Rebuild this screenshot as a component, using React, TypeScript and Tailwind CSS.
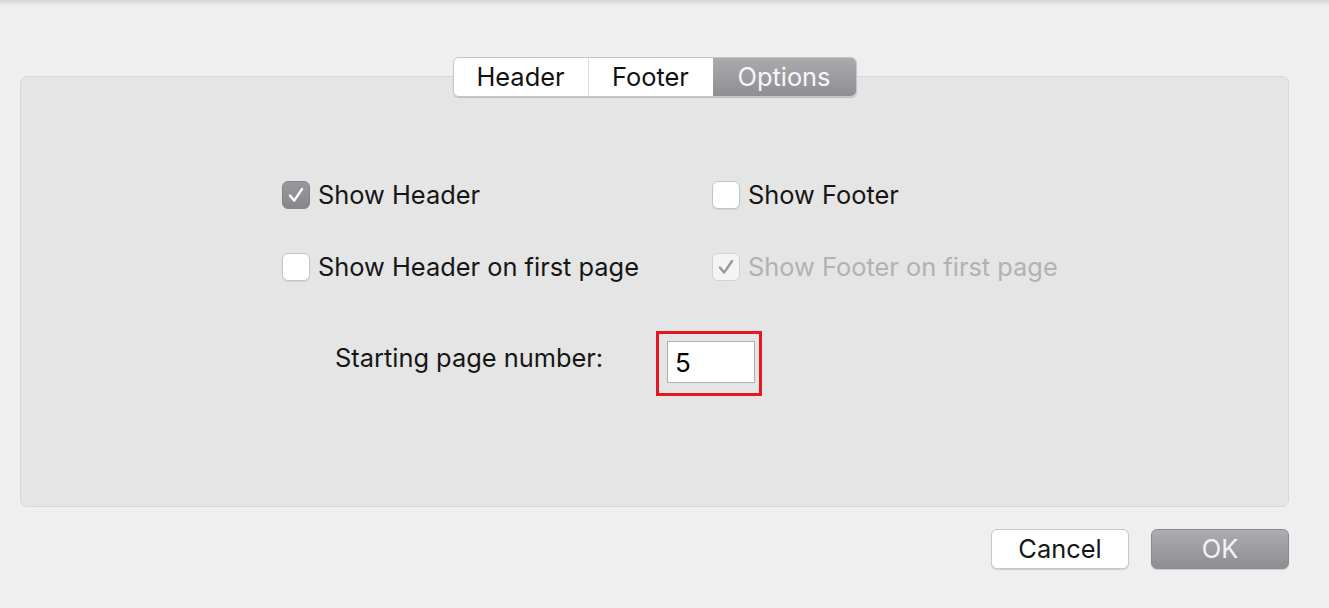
import React from "react";

const font = { fontFamily: "Inter, 'Liberation Sans', sans-serif" };

function Check({ color }: { color: string }) {
  return (
    <svg viewBox="0 0 28 28" className="h-[28px] w-[28px]" aria-hidden="true">
      <path
        d="M7.5 14.5 L12 20 L20.5 7.5"
        fill="none"
        stroke={color}
        strokeWidth="2.6"
        strokeLinecap="round"
        strokeLinejoin="round"
      />
    </svg>
  );
}

function Checkbox({
  label,
  checked,
  disabled,
}: {
  label: string;
  checked?: boolean;
  disabled?: boolean;
}) {
  let box =
    "border border-[#c4c4c4] bg-white shadow-[0_1px_1px_rgba(0,0,0,0.08)]";
  if (checked && !disabled) box = "bg-gradient-to-b from-[#98989c] to-[#88888c] border border-[#858589]";
  if (disabled) box = "border border-[#d2d2d2] bg-[#f4f4f4]";
  return (
    <div className="flex h-[28px] items-center gap-[8px]">
      <span className={`flex h-[28px] w-[28px] shrink-0 items-center justify-center rounded-[6px] ${box}`}>
        {checked && <Check color={disabled ? "#9a9a9a" : "#ffffff"} />}
      </span>
      <span
        className={`whitespace-nowrap text-[25.4px] leading-none ${disabled ? "text-[#b2b2b2]" : "text-[#161616]"}`}
      >
        {label}
      </span>
    </div>
  );
}

export default function App() {
  return (
    <div className="relative h-[608px] w-full overflow-hidden bg-[#efefef]" style={font}>
      <div className="h-[6px] bg-gradient-to-b from-[#d6d6d6] to-[#efefef]"></div>

      <div className="pl-[20px] pr-[40px] pt-[51px]">
        {/* segmented tabs */}
        <div className="relative z-10 flex justify-center">
          <div className="flex h-[40px] overflow-hidden rounded-[6px] border border-[#c6c6c6] shadow-[0_1px_1px_rgba(0,0,0,0.18)]">
            <div className="flex w-[135px] items-center justify-center border-r border-[#dcdcdc] bg-white text-[25.4px] text-[#111]">
              Header
            </div>
            <div className="flex w-[124px] items-center justify-center bg-white text-[25.4px] text-[#111]">
              Footer
            </div>
            <div className="flex w-[143px] items-center justify-center bg-gradient-to-b from-[#ababaf] to-[#8f8f93] text-[25.4px] text-[#f7f7f7]">
              Options
            </div>
          </div>
        </div>

        {/* panel */}
        <div className="-mt-[21px] h-[431px] rounded-[7px] border border-[#d8d8d8] bg-[#e5e5e5] pl-[261px] pt-[104px]">
          <div className="grid grid-cols-[430px_430px] gap-y-[44px]">
            <Checkbox label="Show Header" checked />
            <Checkbox label="Show Footer" />
            <Checkbox label="Show Header on first page" />
            <Checkbox label="Show Footer on first page" checked disabled />
          </div>

          <div className="mt-[50px] flex items-start">
            <div className="w-[374px] pl-[53px] pt-[12px] text-[25.4px] leading-[30px] text-[#161616]">
              Starting page number:
            </div>
            <div className="border-[3px] border-[#e5171f] pb-[10px] pl-[8px] pr-[4px] pt-[7px]">
              <div className="flex h-[42px] w-[88px] items-center border border-[#aeaeae] bg-white pl-[7px] text-[26px] text-black">
                5
              </div>
            </div>
          </div>
        </div>

        {/* buttons */}
        <div className="mt-[22px] flex justify-end gap-[22px]">
          <button className="h-[40px] w-[138px] rounded-[6px] border border-[#c8c8c8] bg-white text-[25.4px] text-[#161616] shadow-[0_1px_1px_rgba(0,0,0,0.15)]">
            Cancel
          </button>
          <button className="h-[40px] w-[138px] rounded-[6px] border border-[#8a8a8e] bg-gradient-to-b from-[#adadb1] to-[#8e8e92] text-[25.4px] text-[#f4f4f4] shadow-[0_1px_1px_rgba(0,0,0,0.15)]">
            OK
          </button>
        </div>
      </div>
    </div>
  );
}
